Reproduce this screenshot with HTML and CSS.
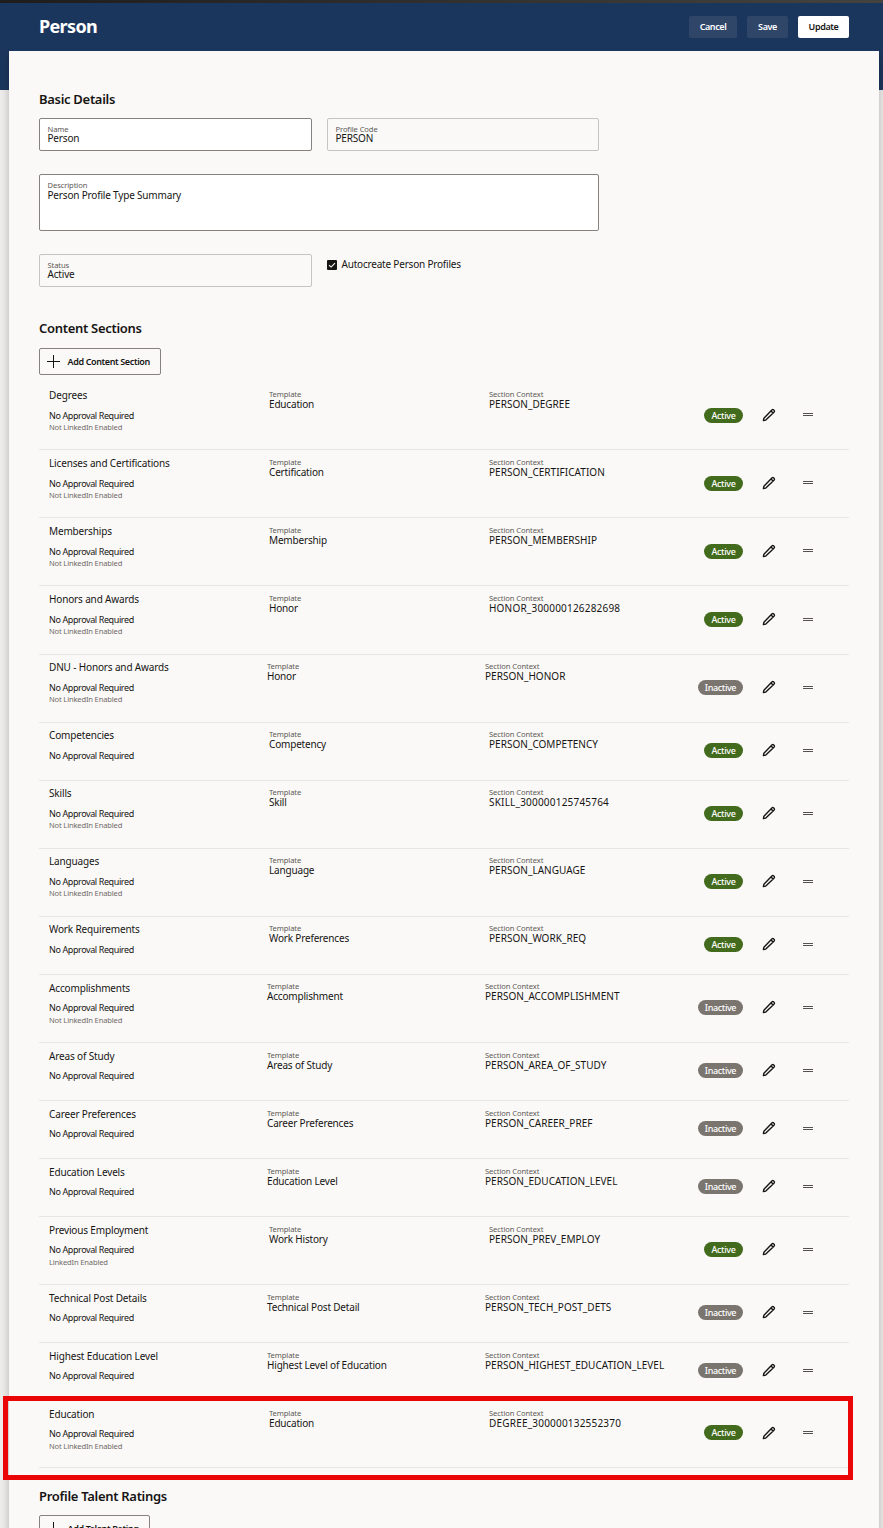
FILE: index.html
```html
<!DOCTYPE html>
<html lang="en">
<head>
<meta charset="utf-8">
<title>Person</title>
<link rel="stylesheet" href="styles.css">
</head>
<body>
<div class="page">
  <div class="topstrip"></div>
  <header class="header">
    <h1 class="title">Person</h1>
    <div class="actions">
      <button class="btn btn-cancel">Cancel</button>
      <button class="btn btn-save">Save</button>
      <button class="btn btn-update">Update</button>
    </div>
  </header>
  <main class="card">
    <h2 class="heading">Basic Details</h2>
    <div class="form">
      <div class="field editable"><span class="label">Name</span><span class="value">Person</span></div>
      <div class="field"><span class="label">Profile Code</span><span class="value">PERSON</span></div>
      <div class="field editable area"><span class="label">Description</span><span class="value">Person Profile Type Summary</span></div>
      <div class="field"><span class="label">Status</span><span class="value">Active</span></div>
      <div class="check">
        <svg width="10" height="10" viewBox="0 0 10 10"><rect width="10" height="10" rx="1" fill="#161513"/><path d="M2 5.1 4.1 7.1 8 3.1" fill="none" stroke="#fff" stroke-width="1.1"/></svg>
        <span>Autocreate Person Profiles</span>
      </div>
    </div>
    <h2 class="heading heading-sections">Content Sections</h2>
    <button class="add add-section"><svg width="13" height="13" viewBox="0 0 13 13"><path d="M0 6.5H13M6.5 0V13" stroke="#161513" fill="none"/></svg><span>Add Content Section</span></button>
    <div class="rows" id="rows"></div>
    <h2 class="heading heading-ratings">Profile Talent Ratings</h2>
    <button class="add add-rating"><svg width="13" height="13" viewBox="0 0 13 13"><path d="M0 6.5H13M6.5 0V13" stroke="#161513" fill="none"/></svg><span>Add Talent Rating</span></button>
  </main>
  <div class="highlight"></div>
</div>
<script src="rows.js"></script>
</body>
</html>
```
FILE: styles.css
```css
* { box-sizing: border-box; }
html, body { margin: 0; height: 1528px; overflow: hidden; }
body { font-family: "Noto Sans", sans-serif; color: #161513; font-size: 10px; }
.page { position: relative; height: 1528px; overflow: hidden; background: linear-gradient(#1b365d 90px, #eeedeb 90px); }
.topstrip { height: 3px; background: linear-gradient(90deg, #1e1d1c, #454340); }
.header { height: 48px; padding: 0 34px 0 39px; display: flex; justify-content: space-between; align-items: center; }
.title { margin: 0; padding-bottom: 2px; font-size: 18px; line-height: 24px; letter-spacing: -0.65px; font-weight: 700; color: #fff; }
.actions { display: flex; gap: 10px; }
.btn { height: 22px; padding: 0 0 1px; border: 0; border-radius: 2px; font: 600 9px "Noto Sans", sans-serif; letter-spacing: -0.4px; color: #fff; background: #304669; }
.btn-cancel { width: 48px; }
.btn-save { width: 41px; }
.btn-update { width: 51px; color: #161513; background: #fff; }
.card { margin: 0 4px 0 9px; height: 1500px; padding: 39px 30px 0; background: #fbf9f8; box-shadow: 0 4px 8px rgba(0, 0, 0, .25); clip-path: inset(0 -9px -9px -9px); }
.heading { margin: 0; font-size: 13px; line-height: 18px; font-weight: 600; letter-spacing: -0.3px; white-space: nowrap; }
.form { width: 560px; margin-top: 10px; display: grid; grid-template-columns: 273px 272px; column-gap: 15px; row-gap: 23px; }
.field { height: 33px; padding: 6px 7.5px 0; border: 1px solid #c6c4c2; border-radius: 2px; display: flex; flex-direction: column; }
.field .value { margin-top: -1px; }
.editable { background: #fff; border-color: #86827f; }
.area { grid-column: 1 / 3; height: 57px; }
.label { font-size: 7.6px; line-height: 9px; letter-spacing: -0.1px; color: #5c5955; white-space: nowrap; }
.value { font-size: 10px; line-height: 11px; letter-spacing: -0.18px; white-space: nowrap; }
.area .value { line-height: 13px; }
.check { display: flex; gap: 4.5px; height: 22px; align-items: center; letter-spacing: -0.2px; }
.check span { padding-bottom: 2px; }
.heading-sections { margin-top: 32px; }
.add { margin: 11px 0 0; height: 27px; padding: 0 0 0 7px; border: 1px solid #86827f; border-radius: 2px; background: transparent; display: flex; align-items: center; gap: 7.5px; font: 600 9px "Noto Sans", sans-serif; letter-spacing: -0.38px; color: #161513; white-space: nowrap; }
.add-section { width: 122px; }
.add-rating { width: 111px; margin-top: 10px; }
.rows { padding-top: 7.4px; }
.row { height: 68.04px; border-bottom: 1px solid #e8e6e5; padding: 0 0 0 10px; display: grid; grid-template-columns: 220px 220px 1fr auto 33px 73px; align-items: start; white-space: nowrap; }
.row.short { height: 58.04px; }
.row.inactive { grid-template-columns: 218px 218px 1fr auto 33px 73px; }
.row:last-child { height: 67px; }
.main, .info { display: flex; flex-direction: column; }
.main { padding-top: 5.85px; }
.name { line-height: 14px; letter-spacing: -0.15px; }
.approval { margin-top: 7.46px; font-size: 9px; line-height: 12px; letter-spacing: -0.4px; }
.linked { margin-top: -0.45px; font-size: 7.6px; line-height: 12px; letter-spacing: -0.18px; color: #6f6b67; }
.info { padding-top: 7.8px; }
.info .context { letter-spacing: 0.03px; }
.info .numbered { letter-spacing: 0.2px; }
.badge { align-self: center; width: 39px; height: 15px; margin-bottom: 1.8px; border-radius: 8px; background: #436b1d; color: #fff; font-size: 9px; line-height: 15px; font-weight: 500; letter-spacing: -0.35px; text-align: center; }
.inactive .badge { width: 45px; background: #7b756f; }
.edit, .drag { align-self: center; justify-self: end; display: block; margin-bottom: 2px; }
.drag { margin-right: 36px; }
.heading-ratings { margin-top: 19.5px; }
.highlight { position: absolute; left: 3px; top: 1396px; width: 850px; height: 84px; border: 5px solid #ea0606; }
```
FILE: rows.js
```js
// name, template, context, status, LinkedIn note
const rows = [
  ["Degrees", "Education", "PERSON_DEGREE", "Active", "Not LinkedIn Enabled"],
  ["Licenses and Certifications", "Certification", "PERSON_CERTIFICATION", "Active", "Not LinkedIn Enabled"],
  ["Memberships", "Membership", "PERSON_MEMBERSHIP", "Active", "Not LinkedIn Enabled"],
  ["Honors and Awards", "Honor", "HONOR_300000126282698", "Active", "Not LinkedIn Enabled"],
  ["DNU - Honors and Awards", "Honor", "PERSON_HONOR", "Inactive", "Not LinkedIn Enabled"],
  ["Competencies", "Competency", "PERSON_COMPETENCY", "Active", ""],
  ["Skills", "Skill", "SKILL_300000125745764", "Active", "Not LinkedIn Enabled"],
  ["Languages", "Language", "PERSON_LANGUAGE", "Active", "Not LinkedIn Enabled"],
  ["Work Requirements", "Work Preferences", "PERSON_WORK_REQ", "Active", ""],
  ["Accomplishments", "Accomplishment", "PERSON_ACCOMPLISHMENT", "Inactive", "Not LinkedIn Enabled"],
  ["Areas of Study", "Areas of Study", "PERSON_AREA_OF_STUDY", "Inactive", ""],
  ["Career Preferences", "Career Preferences", "PERSON_CAREER_PREF", "Inactive", ""],
  ["Education Levels", "Education Level", "PERSON_EDUCATION_LEVEL", "Inactive", ""],
  ["Previous Employment", "Work History", "PERSON_PREV_EMPLOY", "Active", "LinkedIn Enabled"],
  ["Technical Post Details", "Technical Post Detail", "PERSON_TECH_POST_DETS", "Inactive", ""],
  ["Highest Education Level", "Highest Level of Education", "PERSON_HIGHEST_EDUCATION_LEVEL", "Inactive", ""],
  ["Education", "Education", "DEGREE_300000132552370", "Active", "Not LinkedIn Enabled"]
];
document.getElementById("rows").innerHTML = rows.map(([name, template, context, status, note]) => `
<div class="row ${note ? "" : "short"} ${status.toLowerCase()}">
  <div class="main"><span class="name">${name}</span><span class="approval">No Approval Required</span>${note ? `<span class="linked">${note}</span>` : ""}</div>
  <div class="info"><span class="label">Template</span><span class="value">${template}</span></div>
  <div class="info"><span class="label">Section Context</span><span class="value context ${/\d/.test(context) ? "numbered" : ""}">${context}</span></div>
  <span class="badge">${status}</span>
  <svg class="edit" width="14" height="14" viewBox="0 0 14 14" fill="none" stroke="#161513" stroke-width="1.4" stroke-linejoin="round"><path d="M1.4 12.6 1.9 10.2 10.1 1.8Q10.8 1.2 11.5 1.8L12.2 2.5Q12.8 3.2 12.2 3.9L3.8 12.1ZM9 2.9 11.1 5"/></svg>
  <svg class="drag" width="10" height="3" viewBox="0 0 10 3"><path d="M0 .5H10M0 2.5H10" stroke="#55524f"/></svg>
</div>`).join("");
```
